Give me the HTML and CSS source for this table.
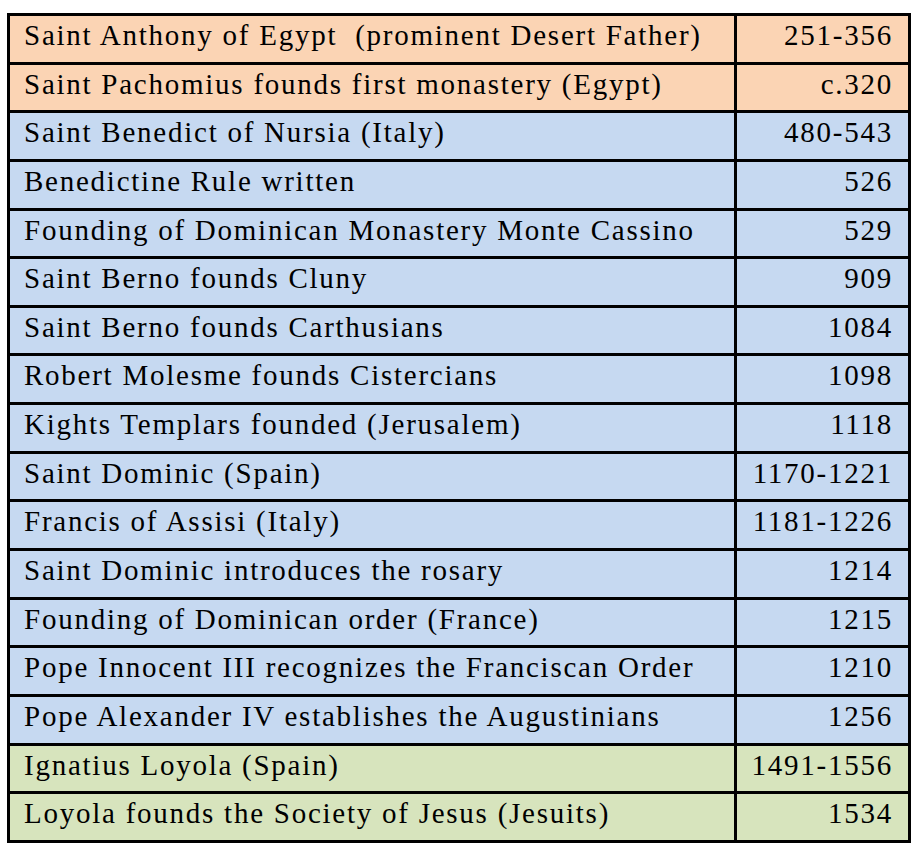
FILE: index.html
```html
<!DOCTYPE html>
<html>
<head>
<meta charset="utf-8">
<link rel="stylesheet" href="styles.css">
</head>
<body>
<table class="timeline">
  <tr class="peach"><td class="event">Saint Anthony of Egypt&nbsp; (prominent Desert Father)</td><td class="year">251-356</td></tr>
  <tr class="peach"><td class="event">Saint Pachomius founds first monastery (Egypt)</td><td class="year">c.320</td></tr>
  <tr class="blue"><td class="event">Saint Benedict of Nursia (Italy)</td><td class="year">480-543</td></tr>
  <tr class="blue"><td class="event">Benedictine Rule written</td><td class="year">526</td></tr>
  <tr class="blue"><td class="event">Founding of Dominican Monastery Monte Cassino</td><td class="year">529</td></tr>
  <tr class="blue"><td class="event">Saint Berno founds Cluny</td><td class="year">909</td></tr>
  <tr class="blue"><td class="event">Saint Berno founds Carthusians</td><td class="year">1084</td></tr>
  <tr class="blue"><td class="event">Robert Molesme founds Cistercians</td><td class="year">1098</td></tr>
  <tr class="blue"><td class="event">Kights Templars founded (Jerusalem)</td><td class="year">1118</td></tr>
  <tr class="blue"><td class="event">Saint Dominic (Spain)</td><td class="year">1170-1221</td></tr>
  <tr class="blue"><td class="event">Francis of Assisi (Italy)</td><td class="year">1181-1226</td></tr>
  <tr class="blue"><td class="event">Saint Dominic introduces the rosary</td><td class="year">1214</td></tr>
  <tr class="blue"><td class="event">Founding of Dominican order (France)</td><td class="year">1215</td></tr>
  <tr class="blue"><td class="event">Pope Innocent III recognizes the Franciscan Order</td><td class="year">1210</td></tr>
  <tr class="blue"><td class="event">Pope Alexander IV establishes the Augustinians</td><td class="year">1256</td></tr>
  <tr class="green"><td class="event">Ignatius Loyola (Spain)</td><td class="year">1491-1556</td></tr>
  <tr class="green"><td class="event">Loyola founds the Society of Jesus (Jesuits)</td><td class="year">1534</td></tr>
</table>
</body>
</html>
```
FILE: styles.css
```css
html, body {
  margin: 0;
  padding: 0;
  background: #ffffff;
}
body {
  padding: 13px 0 0 7px;
}
.timeline {
  border-collapse: separate;
  border-spacing: 0;
  border-top: 3px solid #000;
  border-left: 3px solid #000;
  width: 904px;
  table-layout: fixed;
  font-family: "Liberation Serif", "Times New Roman", serif;
  font-size: 29px;
  letter-spacing: 1.75px;
  color: #000;
}
.timeline td {
  border-right: 3px solid #000;
  border-bottom: 3px solid #000;
  height: 45.65px;
  box-sizing: border-box;
  vertical-align: top;
  line-height: 32px;
  padding: 3px 0 0 0;
  white-space: nowrap;
}
.timeline tr {
  height: 48.65px;
}
.event {
  width: 727px;
  padding-left: 14px !important;
  text-align: left;
}
.year {
  width: 174px;
  text-align: right;
  padding-right: 15px !important;
}
.peach td { background: #fbd4b4; }
.blue td { background: #c6d9f1; }
.green td { background: #d7e4bd; }
```
